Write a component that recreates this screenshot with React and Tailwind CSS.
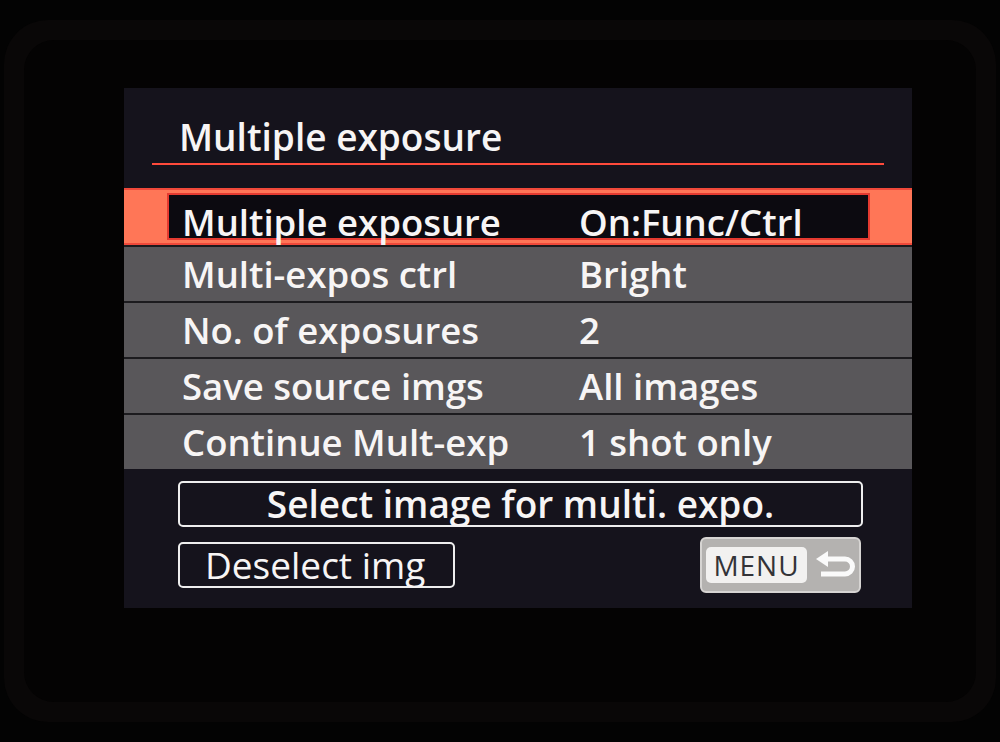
import React from 'react'

const ROWS = [
  { label: 'Multiple exposure', value: 'On:Func/Ctrl', active: true },
  { label: 'Multi-expos ctrl', value: 'Bright' },
  { label: 'No. of exposures', value: '2' },
  { label: 'Save source imgs', value: 'All images' },
  { label: 'Continue Mult-exp', value: '1 shot only' },
]

const font = { fontFamily: '"Open Sans", "Noto Sans", sans-serif' }

function ReturnIcon() {
  return (
    <svg width="42" height="30" viewBox="0 0 42 30" fill="none">
      <path d="M1 9 L13 1 L13 17 Z" fill="#fafafa" />
      <path d="M10 9 H30 A7.5 7.5 0 0 1 30 24 H6" stroke="#fafafa" strokeWidth="5" strokeLinejoin="round" />
    </svg>
  )
}

function MenuRow({ label, value, active }) {
  if (active) {
    return (
      <div className="h-[57px] bg-[#ff7657] border-y-2 border-[#f0493a] pl-[43px] pr-[42px] py-[3px] flex">
        <div className="flex-1 bg-[#0c0a10] border-2 border-[#e53a30] pl-[13px] grid grid-cols-[397px_1fr] items-center">
          <span>{label}</span>
          <span>{value}</span>
        </div>
      </div>
    )
  }
  return (
    <div className="h-[56px] bg-[#59575a] border-t-2 border-[#1c1b1e] pl-[58px] grid grid-cols-[397px_1fr] items-center">
      <span>{label}</span>
      <span>{value}</span>
    </div>
  )
}

export default function App() {
  return (
    <div className="w-[1000px] h-[742px] bg-[#030303] pt-[20px] px-[4px] overflow-hidden" style={font}>
      <div className="h-[702px] rounded-[44px] bg-[#090707] p-[20px]">
        <div className="h-full rounded-[30px] bg-[#040303] pt-[48px] pl-[100px]">
          <div className="w-[788px] h-[520px] bg-[#15131c] text-[#f7f5f5] font-semibold text-[36.5px] flex flex-col">
            <div className="h-[100px] flex flex-col">
              <div className="pl-[55px] pt-[28px] leading-[42px] text-[37px]">Multiple exposure</div>
              <div className="mt-[5px] ml-[28px] w-[732px] h-[2px] bg-[#ff4a3b]" />
            </div>

            <div className="flex flex-col">
              {ROWS.map(r => <MenuRow key={r.label} {...r} />)}
            </div>

            <div className="mt-[12px] ml-[54px] w-[685px] h-[46px] rounded-[5px] border-2 border-[#eeeeee] flex items-center justify-center text-[37px]">
              Select image for multi. expo.
            </div>

            <div className="mt-[10px] ml-[54px] mr-[51px] h-[56px] flex items-center justify-between">
              <div className="w-[277px] h-[46px] rounded-[5px] border-2 border-[#eeeeee] pl-[25px] flex items-center font-normal text-[37px]">
                Deselect img
              </div>
              <div className="w-[161px] h-[56px] rounded-[6px] border-2 border-[#d6d4d2] bg-[#b4b2b0] flex items-center pl-[4px] gap-[8px]">
                <div className="w-[101px] h-[36px] rounded-[5px] bg-[#f2f1f0] flex items-center justify-center text-[#333338] font-normal text-[28px] tracking-[1px]">
                  MENU
                </div>
                <ReturnIcon />
              </div>
            </div>
          </div>
        </div>
      </div>
    </div>
  )
}
